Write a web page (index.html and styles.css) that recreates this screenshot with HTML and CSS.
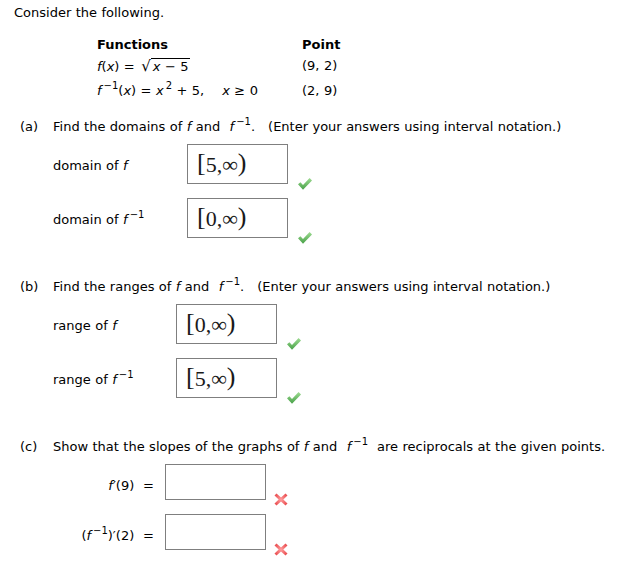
FILE: index.html
```html
<!DOCTYPE html>
<html>
<head>
<meta charset="utf-8">
<link rel="stylesheet" href="styles.css">
</head>
<body>
<svg class="defs" width="0" height="0" aria-hidden="true">
  <defs>
    <linearGradient id="g1" x1="0" y1="0" x2="0" y2="1"><stop offset="0" stop-color="#9fdc93"/><stop offset="1" stop-color="#46a046"/></linearGradient>
    <radialGradient id="g2" cx="0.5" cy="0.5" r="0.6"><stop offset="0" stop-color="#ff9d9d"/><stop offset="1" stop-color="#e94b4e"/></radialGradient>
  </defs>
</svg>
<div class="page">
  <p class="intro">Consider the following.</p>

  <div class="fn-table">
    <div class="fn-row fn-head"><div class="fn-col1">Functions</div><div>Point</div></div>
    <div class="fn-row fn-r2">
      <div class="fn-col1"><i>f</i>(<i>x</i>) = <span class="rad">√</span><span class="radicand"><i>x</i> − 5</span></div>
      <div>(9, 2)</div>
    </div>
    <div class="fn-row fn-r3">
      <div class="fn-col1"><i>f</i><sup class="sup">−1</sup>(<i>x</i>) = <i>x</i><sup class="sup">2</sup> + 5,<span class="cond"><i>x</i> ≥ 0</span></div>
      <div>(2, 9)</div>
    </div>
  </div>

  <div class="part part-a">
    <div class="q"><span class="pl">(a)</span><span>Find the domains of <i>f</i> and <i class="sp">f</i><sup class="sup">−1</sup>.<span class="gap">(Enter your answers using interval notation.)</span></span></div>
    <div class="rows">
      <div class="row">
        <div class="lbl lbl-a">domain of <i>f</i></div>
        <div class="box box-tall"><span class="ans"><span class="br">[</span>5,∞<span class="br">)</span></span></div>
        <span class="mark check"><svg width="14" height="12" viewBox="0 0 14 12"><polygon points="0,6.3 2.4,4.3 5,6.9 11.6,0 14,2.4 5,11.8" fill="url(#g1)"/></svg></span>
      </div>
      <div class="row">
        <div class="lbl lbl-a">domain of <i>f</i><sup class="sup">−1</sup></div>
        <div class="box box-tall"><span class="ans"><span class="br">[</span>0,∞<span class="br">)</span></span></div>
        <span class="mark check"><svg width="14" height="12" viewBox="0 0 14 12"><polygon points="0,6.3 2.4,4.3 5,6.9 11.6,0 14,2.4 5,11.8" fill="url(#g1)"/></svg></span>
      </div>
    </div>
  </div>

  <div class="part part-b">
    <div class="q"><span class="pl">(b)</span><span>Find the ranges of <i>f</i> and <i class="sp">f</i><sup class="sup">−1</sup>.<span class="gap">(Enter your answers using interval notation.)</span></span></div>
    <div class="rows">
      <div class="row">
        <div class="lbl lbl-b">range of <i>f</i></div>
        <div class="box box-tall"><span class="ans"><span class="br">[</span>0,∞<span class="br">)</span></span></div>
        <span class="mark check"><svg width="14" height="12" viewBox="0 0 14 12"><polygon points="0,6.3 2.4,4.3 5,6.9 11.6,0 14,2.4 5,11.8" fill="url(#g1)"/></svg></span>
      </div>
      <div class="row">
        <div class="lbl lbl-b">range of <i>f</i><sup class="sup">−1</sup></div>
        <div class="box box-tall"><span class="ans"><span class="br">[</span>5,∞<span class="br">)</span></span></div>
        <span class="mark check"><svg width="14" height="12" viewBox="0 0 14 12"><polygon points="0,6.3 2.4,4.3 5,6.9 11.6,0 14,2.4 5,11.8" fill="url(#g1)"/></svg></span>
      </div>
    </div>
  </div>

  <div class="part part-c">
    <div class="q"><span class="pl">(c)</span><span>Show that the slopes of the graphs of <i>f</i> and <i class="sp">f</i><sup class="sup">−1</sup><span class="gap2">are reciprocals at the given points.</span></span></div>
    <div class="rows">
      <div class="row">
        <div class="lbl lbl-c"><i>f</i>′(9) &nbsp;=</div>
        <div class="box box-short"></div>
        <span class="mark cross"><svg width="14" height="13" viewBox="0 0 14 13"><polygon points="0.5,2.5 2.5,0.5 7,4.5 11.5,0.5 13.5,2.5 9.3,6.5 13.5,10.5 11.5,12.5 7,8.5 2.5,12.5 0.5,10.5 4.7,6.5" fill="url(#g2)"/></svg></span>
      </div>
      <div class="row">
        <div class="lbl lbl-c">(<i>f</i><sup class="sup">−1</sup>)′(2) &nbsp;=</div>
        <div class="box box-short"></div>
        <span class="mark cross"><svg width="14" height="13" viewBox="0 0 14 13"><polygon points="0.5,2.5 2.5,0.5 7,4.5 11.5,0.5 13.5,2.5 9.3,6.5 13.5,10.5 11.5,12.5 7,8.5 2.5,12.5 0.5,10.5 4.7,6.5" fill="url(#g2)"/></svg></span>
      </div>
    </div>
  </div>
</div>
</body>
</html>
```

FILE: styles.css
```css
html, body {
  margin: 0;
  padding: 0;
  background: #ffffff;
}

body {
  font-family: "DejaVu Sans", Verdana, sans-serif;
  font-size: 13px;
  line-height: 16px;
  color: #000000;
  word-spacing: 0.3px;
}

.defs {
  position: absolute;
  width: 0;
  height: 0;
}

.page {
  padding: 5px 0 30px 14px;
}

.intro {
  margin: 0;
  height: 16px;
}

i {
  font-style: italic;
}

.sup {
  font-size: 10px;
  line-height: 0;
  vertical-align: 6px;
  margin-left: 2px;
}

.sp {
  margin-left: 5px;
}

.gap {
  margin-left: 13px;
}

.gap2 {
  margin-left: 9px;
}

.fn-table {
  margin: 16px 0 0 83px;
}

.fn-row {
  display: flex;
  height: 16px;
}

.fn-col1 {
  width: 205px;
  white-space: nowrap;
}

.fn-head {
  font-weight: bold;
}

.fn-r2 {
  margin-top: 5px;
}

.fn-r3 {
  margin-top: 9px;
}

.rad {
  margin-left: 2px;
  font-size: 15px;
}

.radicand {
  border-top: 1px solid #000;
  padding: 0 1px 0 2px;
}

.cond {
  margin-left: 18px;
}

.part-a {
  margin-top: 20px;
}

.part-b {
  margin-top: 41px;
}

.part-c {
  margin-top: 41px;
}

.q {
  display: flex;
  margin-left: 6px;
  height: 16px;
  white-space: nowrap;
}

.pl {
  width: 33px;
  flex: none;
}

.rows {
  margin-top: 9px;
  margin-left: 39px;
  display: flex;
  flex-direction: column;
  gap: 14px;
}

.row {
  display: flex;
  align-items: center;
}

.lbl {
  flex: none;
  white-space: nowrap;
}

.lbl-a {
  width: 134px;
  padding-top: 3px;
}

.lbl-b {
  width: 123px;
  padding-top: 3px;
}

.lbl-c {
  width: 101px;
  text-align: right;
  margin-top: 8px;
  margin-right: 11px;
}

.box {
  box-sizing: border-box;
  width: 101px;
  border: 1px solid #7f7f7f;
  background: #fff;
  flex: none;
}

.box-tall {
  height: 40px;
  padding: 4px 0 0 9px;
}

.box-short {
  height: 36px;
}

.ans {
  font-family: "Liberation Serif", "Times New Roman", serif;
  font-size: 22px;
  line-height: 28px;
  color: #1a1a1a;
  word-spacing: 0;
}

.br {
  font-size: 26px;
  vertical-align: 1px;
}

.mark {
  align-self: flex-end;
  display: block;
  line-height: 0;
}

.check {
  margin-left: 10px;
  margin-bottom: -6px;
}

.cross {
  margin-left: 8px;
  margin-bottom: -6px;
}
```
